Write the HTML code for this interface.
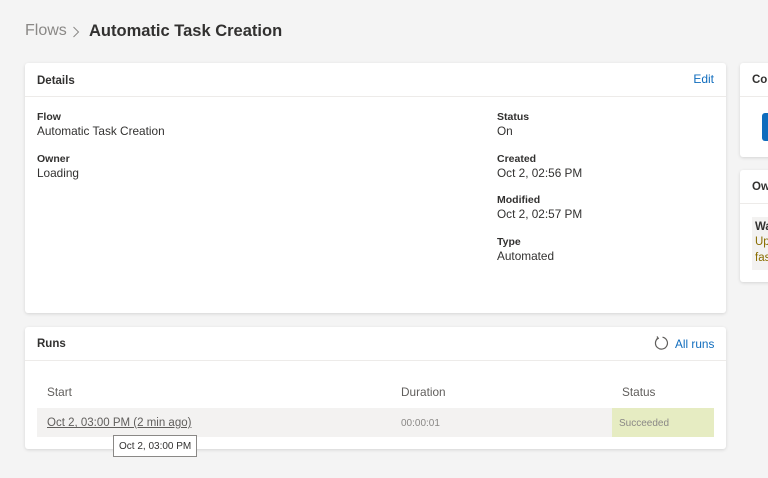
<!DOCTYPE html>
<html><head><meta charset="utf-8"><style>
*{margin:0;padding:0;box-sizing:border-box}
body{width:768px;height:478px;background:#f4f4f4;font-family:"Liberation Sans",sans-serif;color:#323130;position:relative;overflow:hidden}
.a{position:absolute;white-space:nowrap}
.card{position:absolute;background:#fff;border-radius:3px;box-shadow:0 1px 3px rgba(0,0,0,.13)}
.hl{position:absolute;left:0;right:0;height:1px;background:#edebe9}
.lb{font-size:10.5px;font-weight:bold;color:#323130}
.v{font-size:11.8px;color:#323130}
</style></head><body>
<div class="a" style="left:25px;top:22px;font-size:16px;color:#8a8886">Flows</div>
<svg class="a" style="left:72px;top:26px" width="8" height="12" viewBox="0 0 8 12"><path d="M1.5 1l5 5-5 5" fill="none" stroke="#8a8886" stroke-width="1"/></svg>
<div class="a" style="left:89px;top:22px;font-size:16.5px;font-weight:bold;color:#323130">Automatic Task Creation</div>

<div class="card" style="left:25px;top:63px;width:701px;height:250px">
<div class="hl" style="top:33px"></div>
<div class="a lb" style="left:12px;top:12px;font-size:11.5px">Details</div>
<div class="a" style="right:12px;top:9px;font-size:12px;color:#0f6cbd">Edit</div>
<div class="a lb" style="left:12px;top:48px">Flow</div>
<div class="a v" style="left:12px;top:61px">Automatic Task Creation</div>
<div class="a lb" style="left:12px;top:90px">Owner</div>
<div class="a v" style="left:12px;top:103px">Loading</div>
<div class="a lb" style="left:472px;top:48px">Status</div>
<div class="a v" style="left:472px;top:61px">On</div>
<div class="a lb" style="left:472px;top:90px">Created</div>
<div class="a v" style="left:472px;top:103px">Oct 2, 02:56 PM</div>
<div class="a lb" style="left:472px;top:131px">Modified</div>
<div class="a v" style="left:472px;top:144px">Oct 2, 02:57 PM</div>
<div class="a lb" style="left:472px;top:173px">Type</div>
<div class="a v" style="left:472px;top:186px">Automated</div>
</div>

<div class="card" style="left:25px;top:327px;width:701px;height:122px">
<div class="hl" style="top:33px"></div>
<div class="a lb" style="left:12px;top:11px;font-size:11.5px">Runs</div>
<svg class="a" style="left:628px;top:8px" width="16" height="16" viewBox="0 0 16 16"><path d="M5 3.2A6 6 0 1 0 9.5 2.2" fill="none" stroke="#605e5c" stroke-width="1.2"/><path d="M4 1.5L5.3 3.4 3.3 4.3" fill="none" stroke="#605e5c" stroke-width="1.2"/></svg>
<div class="a" style="left:650px;top:10px;font-size:11.8px;color:#0f6cbd">All runs</div>
<div class="a" style="left:22px;top:58px;font-size:11.8px;color:#605e5c">Start</div>
<div class="a" style="left:376px;top:58px;font-size:11.8px;color:#605e5c">Duration</div>
<div class="a" style="left:597px;top:58px;font-size:11.8px;color:#605e5c">Status</div>
<div class="a" style="left:12px;top:81px;width:677px;height:29px;background:#f3f2f1"></div>
<div class="a" style="left:587px;top:81px;width:102px;height:29px;background:#e6ecc2"></div>
<div class="a" style="left:22px;top:90px;font-size:11.5px;color:#605e5c;text-decoration:underline">Oct 2, 03:00 PM (2 min ago)</div>
<div class="a" style="left:376px;top:91px;font-size:10px;color:#8a8886">00:00:01</div>
<div class="a" style="left:594px;top:91px;font-size:10px;color:#8a8886">Succeeded</div>
</div>
<div class="a" style="left:113px;top:435px;width:84px;height:22px;background:#fff;border:1px solid #8a8886;font-size:10px;color:#323130;padding:5px 0 0 5px">Oct 2, 03:00 PM</div>

<div class="card" style="left:740px;top:63px;width:40px;height:94px">
<div class="hl" style="top:33px"></div>
<div class="a lb" style="left:12px;top:11px;font-size:11.5px">Co</div>
<div class="a" style="left:22px;top:50px;width:20px;height:28px;background:#0f6cbd;border-radius:3px"></div>
</div>
<div class="card" style="left:740px;top:170px;width:40px;height:112px">
<div class="hl" style="top:33px"></div>
<div class="a lb" style="left:12px;top:11px;font-size:11.5px">Ow</div>
<div class="a" style="left:12px;top:47px;width:30px;height:53px;background:#f3f2f1"></div>
<div class="a lb" style="left:15px;top:51px;font-size:11.5px">Wa</div>
<div class="a" style="left:15px;top:66px;font-size:11.5px;color:#8a6d00">Up</div>
<div class="a" style="left:15px;top:82px;font-size:11.5px;color:#8a6d00">fas</div>
</div>
</body></html>
